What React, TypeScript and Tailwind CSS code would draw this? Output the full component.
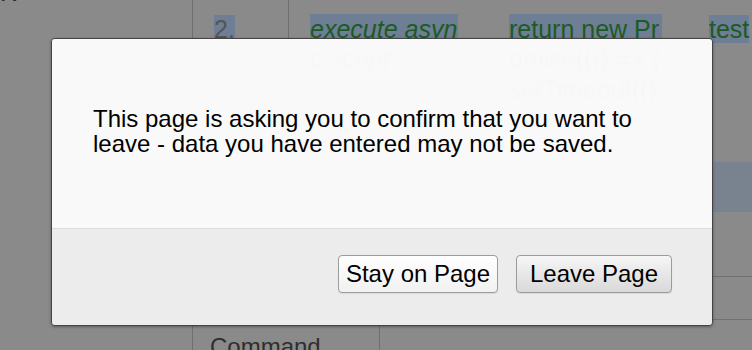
import React from "react";

export default function App() {
  const font = { fontFamily: '"Liberation Sans", Arial, Helvetica, sans-serif' };
  return (
    <div
      className="relative w-[752px] h-[350px] overflow-hidden bg-[#8a8a8a] text-[25px] leading-[30px]"
      style={font}
    >
      {/* background page (dimmed) */}
      <div className="flex flex-col">
        <div className="grid grid-cols-[193px_96px_200px_200px_1fr] h-[150px]">
          <div className="border-r border-[#6f6f6f] overflow-hidden">
            <div className="-mt-[23px] text-[#2a2a2a]">K</div>
          </div>
          <div className="border-r border-[#6f6f6f] pl-[21px] pt-[14px]">
            <span className="bg-[#6e7e94] text-[#545454]">2.</span>
          </div>
          <div className="pl-[21px] pt-[14px] text-[#1d5a24] italic">
            <div className="w-[148px] bg-[#6e7e94]">execute asyn</div>
            <div className="w-[148px] bg-[#6e7e94]">c script</div>
          </div>
          <div className="pl-[20px] pt-[14px] text-[#1d5a24]">
            <div className="w-[153px] bg-[#6e7e94] whitespace-nowrap overflow-hidden">return new Pr</div>
            <div className="w-[153px] bg-[#6e7e94] whitespace-nowrap overflow-hidden">omise((r) =&gt; {"{"}</div>
            <div className="w-[153px] bg-[#6e7e94] whitespace-nowrap overflow-hidden">setTimeout(()</div>
          </div>
          <div className="pl-[20px] pt-[14px] text-[#1d5a24]">
            <span className="bg-[#6e7e94]">test</span>
          </div>
        </div>
        <div className="h-[126px] pt-[12px] pl-[193px]">
          <div className="h-[50px] bg-[#79838f]" />
        </div>
        <div className="ml-[193px] h-[43px] border-t border-[#707070]" />
        <div className="grid grid-cols-[193px_187px_1fr] h-[40px]">
          <div className="border-r border-[#6f6f6f]" />
          <div className="border-r border-t border-[#6f6f6f] pl-[17px] pt-[12px] text-[#2e2e2e] text-[24px]">
            Command
          </div>
          <div className="border-t border-[#707070]" />
        </div>
      </div>

      {/* dialog */}
      <div className="absolute left-[51px] top-[38px] w-[662px] h-[288px] rounded-[4px] border border-[#444444] overflow-hidden flex flex-col shadow-[0_1px_3px_rgba(0,0,0,0.35)]">
        <div className="h-[189px] bg-[#fcfcfc]/[0.975] pl-[41px] pt-[67px] text-[24px] leading-[25px] text-black">
          <p>This page is asking you to confirm that you want to</p>
          <p>leave - data you have entered may not be saved.</p>
        </div>
        <div className="flex-1 border-t border-[#dcdcdc] bg-[#ececec] flex justify-end items-start pt-[26px] pr-[40px] gap-[18px]">
          <button className="w-[160px] h-[38px] rounded-[4px] border border-[#9c9c9c] bg-linear-to-b from-[#ffffff] to-[#f1f1f1] text-[24px] text-black flex items-center justify-center shadow-[0_1px_1px_rgba(0,0,0,0.08)]">
            Stay on Page
          </button>
          <button className="w-[156px] h-[38px] rounded-[4px] border border-[#9c9c9c] bg-linear-to-b from-[#f6f6f6] to-[#d9d9d9] text-[24px] text-black flex items-center justify-center shadow-[0_1px_1px_rgba(0,0,0,0.08)]">
            Leave Page
          </button>
        </div>
      </div>
    </div>
  );
}
